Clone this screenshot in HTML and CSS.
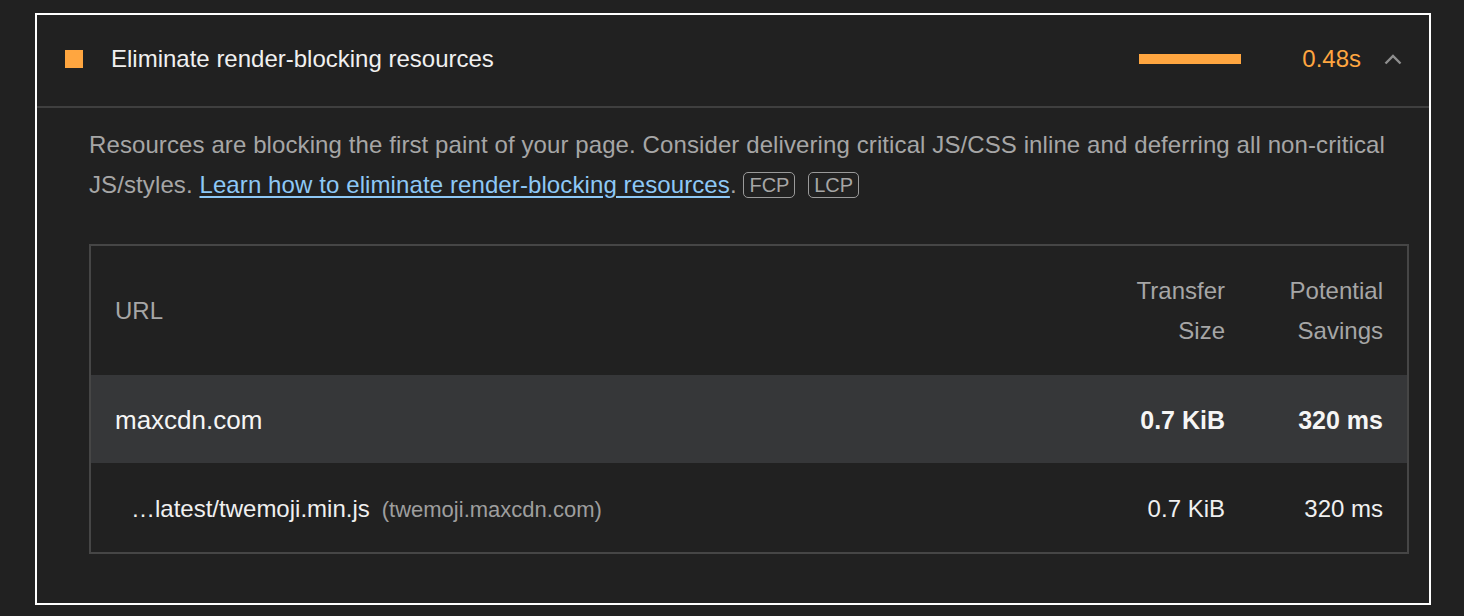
FILE: index.html
```html
<!DOCTYPE html>
<html>
<head>
<meta charset="utf-8">
<link rel="stylesheet" href="styles.css">
</head>
<body>
<div class="audit">
  <div class="audit-header">
    <span class="audit-icon"></span>
    <span class="audit-title">Eliminate render-blocking resources</span>
    <span class="audit-bar"></span>
    <span class="audit-value">0.48s</span>
    <svg class="chevron" width="18" height="12" viewBox="0 0 18 12"><path d="M1.5 10.5 L9 3 L16.5 10.5" fill="none" stroke="#8e8e8e" stroke-width="2.4"/></svg>
  </div>
  <div class="audit-body">
    <p class="desc">Resources are blocking the first paint of your page. Consider delivering critical JS/CSS inline and deferring all non-critical JS/styles. <a class="link" href="#">Learn how to eliminate render-blocking resources</a>. <span class="badge">FCP</span> <span class="badge second">LCP</span></p>
    <div class="table">
      <div class="row head">
        <div class="cell url-col">URL</div>
        <div class="cell num">Transfer<br>Size</div>
        <div class="cell num">Potential<br>Savings</div>
      </div>
      <div class="row group">
        <div class="cell url-col">maxcdn.com</div>
        <div class="cell num strong">0.7 KiB</div>
        <div class="cell num strong">320 ms</div>
      </div>
      <div class="row sub">
        <div class="cell url-col"><span class="file">…latest/twemoji.min.js</span><span class="host">(twemoji.maxcdn.com)</span></div>
        <div class="cell num">0.7 KiB</div>
        <div class="cell num">320 ms</div>
      </div>
    </div>
  </div>
</div>
</body>
</html>
```
FILE: styles.css
```css
html, body {
  margin: 0;
  padding: 0;
  background: #212121;
  font-family: "Liberation Sans", Arial, Helvetica, sans-serif;
}

.audit {
  margin: 13px 0 0 35px;
  width: 1392px;
  height: 588px;
  border: 2px solid #ffffff;
  background: #212121;
}

.audit-header {
  display: flex;
  align-items: center;
  height: 88px;
  padding: 0 27px 3px 28px;
  border-bottom: 2px solid #3f3f3f;
}

.audit-icon {
  width: 18px;
  height: 18px;
  background: #ffa640;
  flex: none;
}

.audit-title {
  margin-left: 28px;
  flex: 1;
  font-size: 24px;
  color: #f0f0f0;
}

.audit-bar {
  width: 102px;
  height: 10px;
  background: #ffa640;
  flex: none;
}

.audit-value {
  margin-left: 61px;
  font-size: 24px;
  color: #ffa640;
}

.chevron {
  margin-left: 23px;
  flex: none;
}

.audit-body {
  padding: 17px 20px 0 52px;
}

.desc {
  margin: 0;
  font-size: 24px;
  line-height: 40px;
  letter-spacing: 0.1px;
  color: #a6a6a6;
}

.link {
  color: #8ec8f6;
  text-decoration: underline;
  text-underline-offset: 3px;
}

.badge {
  display: inline-block;
  border: 1.5px solid #9a9a9a;
  border-radius: 5px;
  padding: 0 5px;
  line-height: 24px;
  font-size: 20px;
  letter-spacing: 0;
  color: #a6a6a6;
  vertical-align: 1px;
}

.badge.second {
  margin-left: 6px;
}

.table {
  margin-top: 39px;
  width: 1316px;
  border: 2px solid #464646;
}

.row {
  display: grid;
  grid-template-columns: 1fr 134px 158px;
  align-items: center;
  padding: 0 24px 0 24px;
}

.row.head {
  height: 129px;
}

.row.group {
  height: 88px;
  background: #363739;
}

.row.sub {
  height: 89px;
}

.cell {
  font-size: 24px;
  line-height: 40px;
}

.head .cell {
  color: #a6a6a6;
}

.num {
  text-align: right;
  color: #f0f0f0;
}

.group .cell {
  color: #f5f5f5;
  font-size: 25px;
  padding-top: 2px;
}

.group .url-col {
  font-size: 26px;
}

.strong {
  font-weight: bold;
}

.sub .cell {
  color: #f0f0f0;
  padding-top: 3px;
}

.sub .url-col {
  padding-left: 16px;
}

.host {
  margin-left: 12px;
  font-size: 22px;
  color: #9e9e9e;
}
```
